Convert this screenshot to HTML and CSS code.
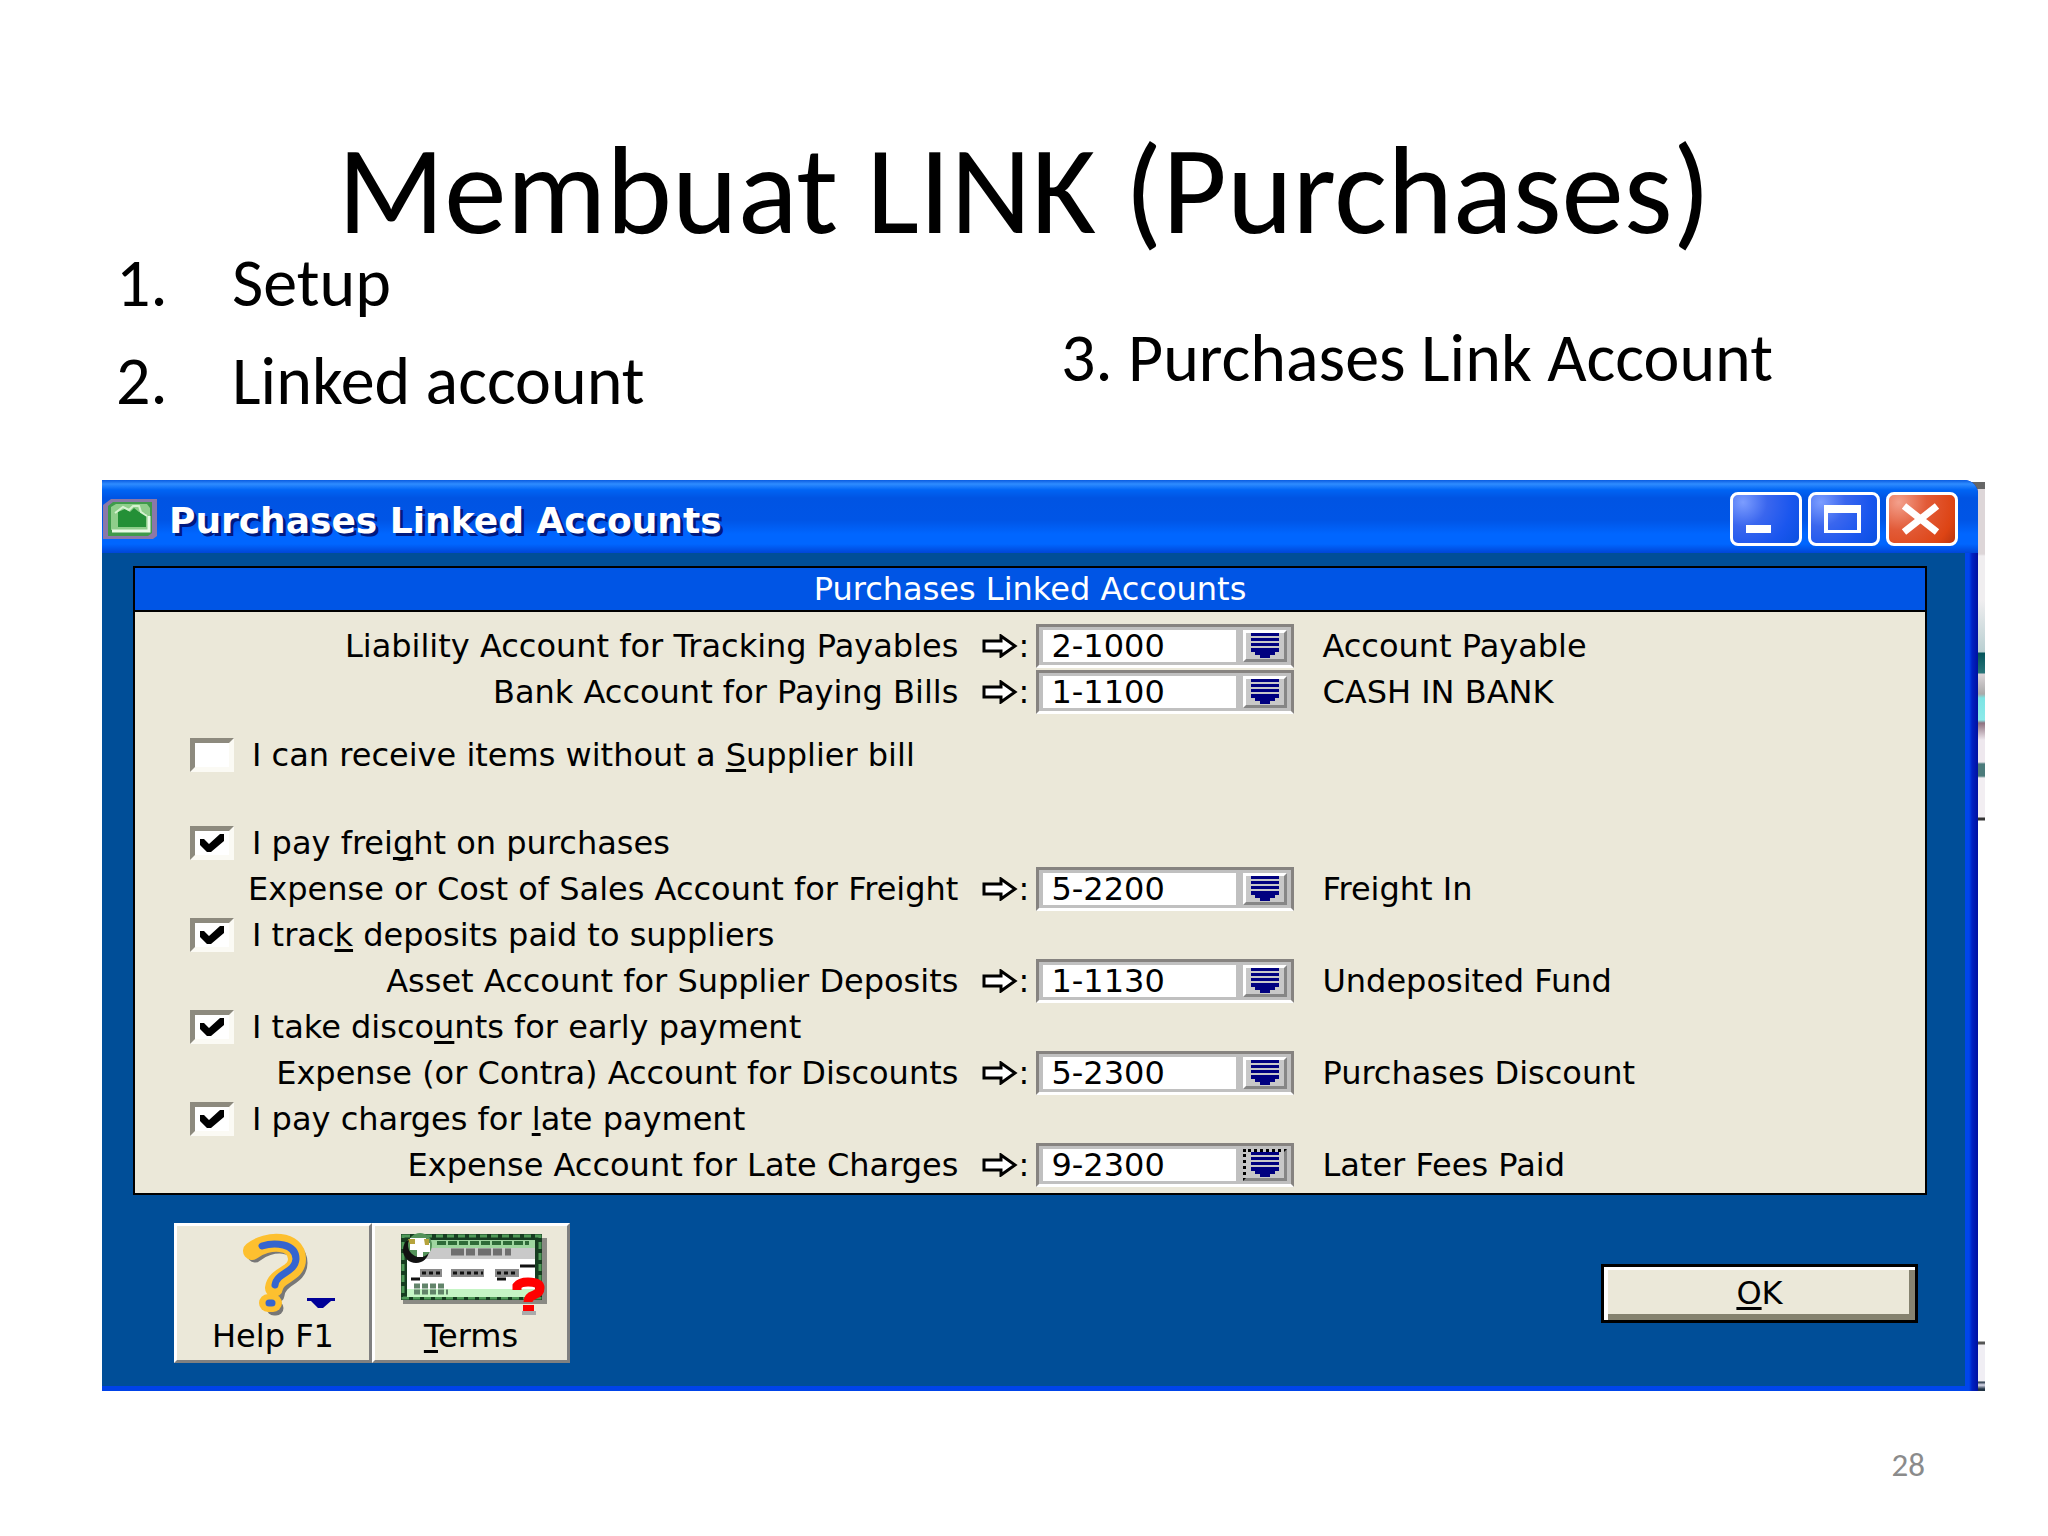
FILE: index.html
```
<!DOCTYPE html>
<html lang="id">
<head>
    <meta charset="UTF-8">
    <meta name="viewport" content="width=device-width, initial-scale=1.0">
    <title>Membuat LINK (Purchases)</title>
    <link rel="stylesheet" href="styles.css">
</head>
<body>
    <h1>Membuat LINK (Purchases)</h1>
    <div class="steps">
        <ol>
            <li>Setup</li>
            <li>Linked account</li>
        </ol>
        <p>3. Purchases Link Account</p>
    </div>

    <div class="desktop">
        <div class="window">
            <div class="title-bar">
                <svg class="app-icon" viewBox="0 0 54 40" aria-hidden="true">
                    <path d="M0 6 L8 0 H54 V37 L50 40 H0z" fill="#8b78a8"/>
                    <path d="M5 7 L10 3 H49 V34 L45 37 H5z" fill="#3f9a4b"/>
                    <path d="M8 8 L13 5 H44 L47 9 V31 H8z" fill="#8fce8b"/>
                    <path d="M15 13 L22 10 L27 13 L31 9 L36 13 L43 15 V28 H15z" fill="#249037"/>
                    <path d="M9 32 H46 V17" fill="none" stroke="#eafae6" stroke-width="3"/>
                    <path d="M12 14 L20 8 L26 11 L30 7 L36 7 L38 13 L44 17" fill="none" stroke="#d5f2cf" stroke-width="2"/>
                </svg>
                <h2>Purchases Linked Accounts</h2>
                <div class="window-buttons">
                    <button type="button" aria-label="Minimize">
                        <svg viewBox="0 0 64 48"><rect x="13" y="30" width="25" height="8" fill="#fff"/></svg>
                    </button>
                    <button type="button" aria-label="Maximize">
                        <svg viewBox="0 0 64 48"><path d="M13 10h37v28H13zM17 18v17h29V18z" fill="#fff" fill-rule="evenodd"/></svg>
                    </button>
                    <button type="button" class="close" aria-label="Close">
                        <svg viewBox="0 0 64 48"><path d="M15 11 L48 37 M48 11 L15 37" stroke="#fff" stroke-width="7"/></svg>
                    </button>
                </div>
            </div>

            <form class="window-body">
                <div class="panel">
                    <h3>Purchases Linked Accounts</h3>
                    <div class="rows">
                        <div class="account">
                            <label for="payables">Liability Account for Tracking Payables</label>
                            <span class="arrow"><svg viewBox="0 0 36 24"><path d="M2 7h17V2l14 10-14 10v-5H2z"/></svg>:</span>
                            <span class="combo">
                                <select id="payables"><option>2-1000</option></select>
                                <span class="drop"><svg viewBox="0 0 28 26"><path d="M0 0h28v3H0zM0 5h28v3H0zM0 10h28v3H0zM0 15h28v4h-4v3h-5v3h-10v-3H4v-3H0z"/></svg></span>
                            </span>
                            <span>Account Payable</span>
                        </div>
                        <div class="account">
                            <label for="bills">Bank Account for Paying Bills</label>
                            <span class="arrow"><svg viewBox="0 0 36 24"><path d="M2 7h17V2l14 10-14 10v-5H2z"/></svg>:</span>
                            <span class="combo">
                                <select id="bills"><option>1-1100</option></select>
                                <span class="drop"><svg viewBox="0 0 28 26"><path d="M0 0h28v3H0zM0 5h28v3H0zM0 10h28v3H0zM0 15h28v4h-4v3h-5v3h-10v-3H4v-3H0z"/></svg></span>
                            </span>
                            <span>CASH IN BANK</span>
                        </div>

                        <label class="check receive"><input type="checkbox"><span>I can receive items without a <u>S</u>upplier bill</span></label>

                        <label class="check"><input type="checkbox" checked><span>I pay frei<u>g</u>ht on purchases</span></label>
                        <div class="account">
                            <label for="freight">Expense or Cost of Sales Account for Freight</label>
                            <span class="arrow"><svg viewBox="0 0 36 24"><path d="M2 7h17V2l14 10-14 10v-5H2z"/></svg>:</span>
                            <span class="combo">
                                <select id="freight"><option>5-2200</option></select>
                                <span class="drop"><svg viewBox="0 0 28 26"><path d="M0 0h28v3H0zM0 5h28v3H0zM0 10h28v3H0zM0 15h28v4h-4v3h-5v3h-10v-3H4v-3H0z"/></svg></span>
                            </span>
                            <span>Freight In</span>
                        </div>

                        <label class="check"><input type="checkbox" checked><span>I trac<u>k</u> deposits paid to suppliers</span></label>
                        <div class="account">
                            <label for="deposits">Asset Account for Supplier Deposits</label>
                            <span class="arrow"><svg viewBox="0 0 36 24"><path d="M2 7h17V2l14 10-14 10v-5H2z"/></svg>:</span>
                            <span class="combo">
                                <select id="deposits"><option>1-1130</option></select>
                                <span class="drop"><svg viewBox="0 0 28 26"><path d="M0 0h28v3H0zM0 5h28v3H0zM0 10h28v3H0zM0 15h28v4h-4v3h-5v3h-10v-3H4v-3H0z"/></svg></span>
                            </span>
                            <span>Undeposited Fund</span>
                        </div>

                        <label class="check"><input type="checkbox" checked><span>I take disco<u>u</u>nts for early payment</span></label>
                        <div class="account">
                            <label for="discounts">Expense (or Contra) Account for Discounts</label>
                            <span class="arrow"><svg viewBox="0 0 36 24"><path d="M2 7h17V2l14 10-14 10v-5H2z"/></svg>:</span>
                            <span class="combo">
                                <select id="discounts"><option>5-2300</option></select>
                                <span class="drop"><svg viewBox="0 0 28 26"><path d="M0 0h28v3H0zM0 5h28v3H0zM0 10h28v3H0zM0 15h28v4h-4v3h-5v3h-10v-3H4v-3H0z"/></svg></span>
                            </span>
                            <span>Purchases Discount</span>
                        </div>

                        <label class="check"><input type="checkbox" checked><span>I pay charges for <u>l</u>ate payment</span></label>
                        <div class="account">
                            <label for="late">Expense Account for Late Charges</label>
                            <span class="arrow"><svg viewBox="0 0 36 24"><path d="M2 7h17V2l14 10-14 10v-5H2z"/></svg>:</span>
                            <span class="combo">
                                <select id="late"><option>9-2300</option></select>
                                <span class="drop focused"><svg viewBox="0 0 28 26"><path d="M0 0h28v3H0zM0 5h28v3H0zM0 10h28v3H0zM0 15h28v4h-4v3h-5v3h-10v-3H4v-3H0z"/></svg></span>
                            </span>
                            <span>Later Fees Paid</span>
                        </div>
                    </div>
                </div>

                <div class="footer">
                    <div class="tools">
                        <button type="button">
                            <svg viewBox="0 0 190 90" aria-hidden="true">
                                <g fill="none" stroke-linecap="round" stroke-linejoin="round">
                                    <path d="M77 29 C92 16 122 16 122 37 C122 53 101 52 99 69" stroke="#777" stroke-width="15"/>
                                    <path d="M96 82h2" stroke="#777" stroke-width="15"/>
                                    <path d="M74 25 C89 13 119 13 119 33 C119 49 98 48 96 62" stroke="#fdc02f" stroke-width="18"/>
                                    <path d="M90 77h5" stroke="#fdc02f" stroke-width="18"/>
                                    <path d="M84 20 C96 16 118 17 118 33 C117 47 99 46 97 59" stroke="#3565cf" stroke-width="7"/>
                                    <path d="M91 77h3" stroke="#3565cf" stroke-width="7"/>
                                </g>
                                <path d="M129 72h28v3h-4l-8 7h-5l-7-7h-4z" fill="#000098"/>
                            </svg>
                            <span>Help F1</span>
                        </button>
                        <button type="button">
                            <svg viewBox="4 4 190 90" aria-hidden="true">
                                <rect x="31" y="16" width="144" height="66" fill="#8a8a84"/>
                                <rect x="29" y="12" width="141" height="66" fill="#163c20"/>
                                <rect x="31" y="14" width="137" height="62" fill="none" stroke="#4f9a58" stroke-width="3" stroke-dasharray="7 4"/>
                                <rect x="35" y="18" width="128" height="57" fill="#fff"/>
                                <rect x="35" y="18" width="128" height="8" fill="#9fd6a0"/>
                                <rect x="46" y="26" width="117" height="11" fill="#c9c9c9"/>
                                <rect x="35" y="67" width="128" height="8" fill="#c5f5c5"/>
                                <path d="M65 21h92" stroke="#2e6b38" stroke-width="4" stroke-dasharray="9 2"/>
                                <path d="M79 30h60" stroke="#6f6f6f" stroke-width="7" stroke-dasharray="13 2 9 3"/>
                                <circle cx="44" cy="28" r="13" fill="#111"/>
                                <circle cx="48" cy="23" r="12" fill="#55935a"/>
                                <path d="M38 16h16v5h4v9h-7v5h-6v-7h-7z" fill="#fff"/>
                                <path d="M36 17h7v5h-5zM52 17h5v6h-4z" fill="#b6a33c"/>
                                <path d="M48 51h22M79 51h33M123 51h24" stroke="#8a8a8a" stroke-width="8"/>
                                <path d="M50 51h20M81 51h30M125 51h20" stroke="#111" stroke-width="3" stroke-dasharray="4 3"/>
                                <path d="M148 44h15M39 57h9M125 57h9" stroke="#111" stroke-width="3"/>
                                <path d="M42 64h30M42 70h34" stroke="#62846a" stroke-width="5" stroke-dasharray="6 2"/>
                                <path d="M150 91h14" stroke="#aaa" stroke-width="4"/>
                                <path d="M145 68v-4q3-4 11-4 12 0 12 6 0 5-6 7-6 2-6 7" fill="none" stroke="#f00" stroke-width="9"/>
                                <rect x="151" y="83" width="11" height="6" fill="#f00"/>
                            </svg>
                            <span><u>T</u>erms</span>
                        </button>
                    </div>
                    <button type="button" class="ok"><u>O</u>K</button>
                </div>
            </form>
        </div>
    </div>
    <p class="page-number">28</p>
</body>
</html>
```
FILE: styles.css
```
body {
    background-color: white;
    color: black;
    font-family: Carlito, Calibri, Lato, sans-serif;
    margin: 0;
    padding-top: 119px;
}

h1, h2, h3, p, ol {
    margin: 0;
    font-weight: normal;
}

h1 {
    font-size: 125px;
    line-height: 144px;
    text-align: center;
}

/* Steps above the window */
.steps {
    display: grid;
    grid-template-columns: 1061px 1fr;
    font-size: 68px;
    line-height: 98px;
    height: 217px;
}

.steps ol {
    list-style: none;
    counter-reset: step;
    padding-left: 116px;
    margin-top: -29px;
}

.steps li {
    display: flex;
    counter-increment: step;
}

.steps li::before {
    content: counter(step) ".";
    width: 116px;
}

.steps p {
    margin-top: 46px;
}

/* The strip on the right is what shows of the program behind */
.desktop {
    margin: 0 63px 0 102px;
    padding-right: 7px;
    background: linear-gradient(to bottom,
        white 2px, #666 2px, #666 9px, #ddd6d8 9px, #ddd6d8 74px, #f0eef0 76px, #f0eef0 120px,
        #b9cfd1 172px, #04545a 173px, #287478 193px, #dcd5d8 194px, #aaa 214px,
        #7de4e4 218px, #8ceaea 240px, #8f7280 243px, #eee8ee 260px, #eee8ee 282px,
        #4c7b7b 284px, #4c7b7b 296px, #f2eef2 298px, #f2eef2 337px, #333 338px, #333 340px,
        white 341px, white 861px, #555 862px, #555 864px, #f0eef4 865px, #f0eef4 901px,
        #234 902px, #dde 905px, #234 909px);
}

.window {
    border-radius: 0 14px 0 0;
    padding: 0 13px 5px 0;
    background: linear-gradient(to left, #0010a0, #0022c4 6px, #0046ec 9px, #0042e8);
    font-family: "DejaVu Sans", sans-serif;
    font-size: 32px;
}

.title-bar {
    display: flex;
    align-items: center;
    height: 73px;
    margin-right: -13px;
    padding-right: 20px;
    box-sizing: border-box;
    border-radius: 0 14px 0 0;
    background: linear-gradient(to bottom, #0a5be0, #2f8cff 4px, #0064f4 10px, #0054e3 18px, #0055e6 40px, #0066ff 54px, #0066ff 64px, #0046d8 73px);
}

.app-icon {
    width: 54px;
    height: 40px;
    margin: 4px 12px 0 1px;
}

.title-bar h2 {
    flex: 1;
    color: white;
    font-size: 36px;
    font-weight: bold;
    line-height: 40px;
    padding-top: 8px;
    text-shadow: 3px 3px 0 #001a80;
}

.window-buttons {
    display: flex;
    gap: 6px;
    padding-top: 4px;
}

.window-buttons button {
    width: 72px;
    height: 54px;
    padding: 0;
    border: 3px solid white;
    border-radius: 8px;
    background: radial-gradient(circle at 15% 15%, #7c9dff, #3a66ee 35%, #1a56ee 70%, #0a50e0);
}

.window-buttons .close {
    background: radial-gradient(circle at 15% 15%, #f3a08c, #e25b38 40%, #dd4414 80%, #b83510);
}

.window-buttons svg {
    display: block;
    width: 64px;
    height: 48px;
}

.window-body {
    background-color: #004e98;
    padding: 13px 38px 23px 31px;
}

.panel {
    border: 2px solid black;
    background-color: #ebe8d9;
}

.panel h3 {
    background-color: #0055e5;
    border-bottom: 2px solid black;
    color: white;
    font-size: 32px;
    line-height: 42px;
    text-align: center;
}

.rows {
    line-height: 46px;
    padding: 11px 0 5px;
}

.account {
    display: grid;
    grid-template-columns: 46% 78px 258px 1fr;
    align-items: center;
    height: 46px;
}

.account label {
    text-align: right;
    white-space: nowrap;
}

.account > span:last-child {
    padding-left: 28px;
}

.arrow {
    display: flex;
    align-items: center;
    padding-left: 24px;
}

.arrow svg {
    width: 36px;
    height: 24px;
    fill: white;
    stroke: black;
    stroke-width: 3px;
}

.combo {
    display: flex;
    gap: 7px;
    box-sizing: border-box;
    height: 44px;
    padding: 3px 4px;
    background-color: #c0c0c0;
    border: 3px solid #868380;
    border-bottom-color: white;
}

.combo select {
    flex: 1;
    min-width: 0;
    appearance: none;
    background-color: white;
    border: none;
    border-radius: 0;
    color: black;
    font: inherit;
    line-height: 32px;
    padding: 0 0 0 8px;
}

.drop {
    display: flex;
    justify-content: center;
    width: 38px;
    border: 3px solid white;
    border-right-color: #868686;
    border-bottom-color: #868686;
    background-color: #c8c8c8;
}

.drop.focused {
    border-top: 3px dotted black;
    border-left: 3px dotted black;
}

.drop svg {
    width: 28px;
    height: 26px;
    fill: #000080;
}

.check {
    display: flex;
    align-items: center;
    gap: 18px;
    height: 46px;
    padding-left: 55px;
}

.receive {
    margin: 17px 0 42px;
}

.check input {
    appearance: none;
    box-sizing: border-box;
    width: 44px;
    height: 34px;
    margin: 0;
    background: white;
    border: 5px solid #fbfaf4;
    border-top-color: #8d8a7e;
    border-left-color: #8d8a7e;
}

.check input:checked {
    background: white url("data:image/svg+xml,%3Csvg xmlns='http://www.w3.org/2000/svg' viewBox='0 0 24 18'%3E%3Cpath d='M0 5h4l5 5L20 0h4v7L11 18H7L0 11z'/%3E%3C/svg%3E") center / 24px 18px no-repeat;
}

u {
    text-decoration-thickness: 3px;
    text-underline-offset: 3px;
    text-decoration-skip-ink: none;
}

/* Bottom buttons */
.footer {
    display: flex;
    justify-content: space-between;
    align-items: center;
    padding: 28px 9px 0 41px;
}

.tools {
    display: flex;
}

.tools button {
    display: flex;
    flex-direction: column;
    align-items: center;
    box-sizing: border-box;
    width: 198px;
    height: 140px;
    padding: 0;
    background-color: #ebe8d9;
    border: 3px solid white;
    border-right-color: #808080;
    border-bottom-color: #808080;
    color: black;
    font: inherit;
    line-height: 40px;
}

.tools svg {
    width: 190px;
    height: 90px;
}

.ok {
    width: 317px;
    height: 59px;
    padding: 0;
    background-color: #ebe8d9;
    border: 3px solid black;
    box-shadow: inset 4px 3px 0 white, inset -6px -6px 0 #85826f;
    color: black;
    font: inherit;
    line-height: 40px;
}

.page-number {
    color: #8b8b8b;
    font-size: 33px;
    line-height: 40px;
    margin: 54px 123px 0 0;
    text-align: right;
}
```
